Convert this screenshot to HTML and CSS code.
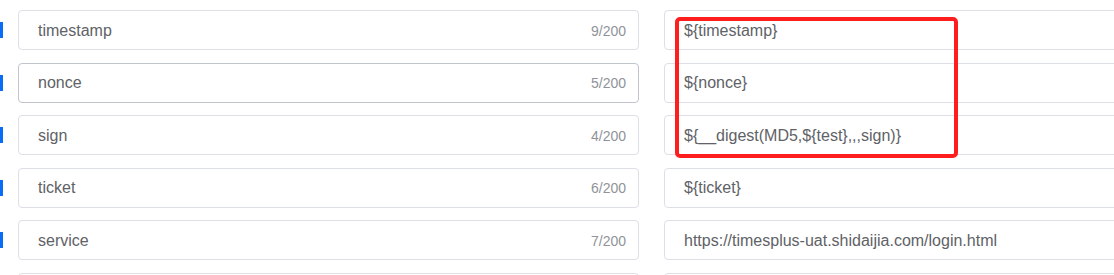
FILE: index.html
```html
<!DOCTYPE html>
<html>
<head>
<meta charset="utf-8">
<link rel="stylesheet" href="styles.css">
</head>
<body>
<div class="page">
  <div class="rows">
    <div class="row">
      <span class="marker"></span>
      <div class="field key"><span class="val">timestamp</span><span class="count">9/200</span></div>
      <div class="field value"><span class="val">${timestamp}</span></div>
    </div>
    <div class="row">
      <span class="marker"></span>
      <div class="field key hover"><span class="val">nonce</span><span class="count">5/200</span></div>
      <div class="field value"><span class="val">${nonce}</span></div>
    </div>
    <div class="row">
      <span class="marker"></span>
      <div class="field key"><span class="val">sign</span><span class="count">4/200</span></div>
      <div class="field value"><span class="val">${__digest(MD5,${test},,,sign)}</span></div>
    </div>
    <div class="row">
      <span class="marker"></span>
      <div class="field key"><span class="val">ticket</span><span class="count">6/200</span></div>
      <div class="field value"><span class="val">${ticket}</span></div>
    </div>
    <div class="row">
      <span class="marker"></span>
      <div class="field key"><span class="val">service</span><span class="count">7/200</span></div>
      <div class="field value"><span class="val">https://timesplus-uat.shidaijia.com/login.html</span></div>
    </div>
    <div class="row">
      <span class="marker"></span>
      <div class="field key"><span class="val"></span></div>
      <div class="field value"><span class="val"></span></div>
    </div>
  </div>
  <div class="highlight"></div>
</div>
</body>
</html>
```
FILE: styles.css
```css
html, body {
  margin: 0;
  padding: 0;
  background: #ffffff;
  overflow: hidden;
}
body {
  width: 1114px;
  height: 275px;
  font-family: "Liberation Sans", Arial, sans-serif;
}
.page {
  position: relative;
  width: 1114px;
  height: 275px;
  overflow: hidden;
}
.rows {
  display: flex;
  flex-direction: column;
  gap: 12.6px;
  padding-top: 10px;
}
.row {
  display: flex;
  align-items: center;
  height: 40px;
  flex: none;
}
.marker {
  width: 3px;
  height: 16px;
  background: #0b6cf5;
  flex: none;
}
.field {
  box-sizing: border-box;
  height: 40px;
  border: 1px solid #dcdfe6;
  border-radius: 4px;
  display: flex;
  align-items: center;
  justify-content: space-between;
  flex: none;
  background: #fff;
  padding-top: 1px;
}
.field.key {
  width: 621px;
  margin-left: 15px;
  padding-left: 19px;
  padding-right: 12px;
}
.field.hover {
  border-color: #c0c4cc;
}
.field.value {
  width: 480px;
  margin-left: 25px;
  padding-left: 19px;
  padding-right: 19px;
}
.val {
  font-size: 16px;
  color: #606266;
  white-space: nowrap;
}
.count {
  font-size: 14px;
  color: #909399;
}
.highlight {
  position: absolute;
  left: 675px;
  top: 17px;
  width: 283px;
  height: 141px;
  box-sizing: border-box;
  border: 4px solid #ff1e1e;
  border-radius: 5px;
}
```
